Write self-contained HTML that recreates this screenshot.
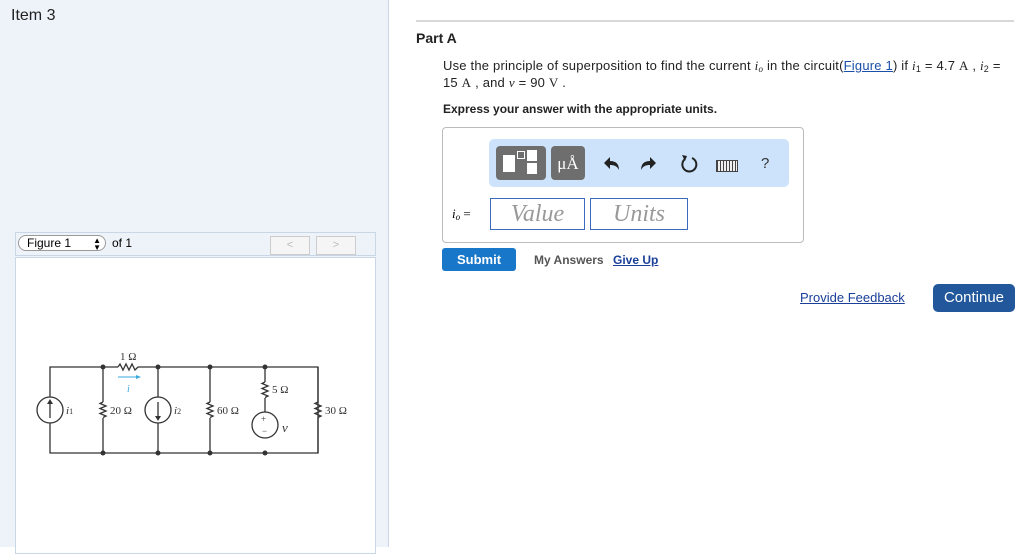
<!DOCTYPE html>
<html><head><meta charset="utf-8"><style>
body{margin:0;width:1024px;height:547px;background:#fff;font-family:"Liberation Sans",sans-serif;position:relative;overflow:hidden}
.left{position:absolute;left:0;top:0;width:388px;height:547px;background:#eef3f9;border-right:1px solid #c9d6e6}
.a{position:absolute}
.tb{background:#6e6e6e;border-radius:4px;position:absolute;top:146px;height:34px}
.inp{position:absolute;top:198px;width:95px;height:32px;border:1px solid #3a6bbf;box-sizing:border-box;font-family:"Liberation Serif",serif;font-style:italic;font-size:24px;color:#999;text-align:center;line-height:30px}
.s{font-size:9px;line-height:0;vertical-align:-2px}
.m{font-family:"Liberation Serif",serif}
</style></head><body>
<div class="left"></div>
<div class="a" style="left:11px;top:7px;font-size:16px;color:#222">Item 3</div>
<div class="a" style="left:15px;top:232px;width:359px;height:22px;background:#eef3f9;border:1px solid #c9d6e6"></div>
<div class="a" style="left:18px;top:235px;width:88px;height:16px;border:1px solid #999;border-radius:8px;background:#fff;font-size:12px;line-height:15px;padding-left:8px;box-sizing:border-box">Figure 1<span style="position:absolute;right:4px;font-size:8px;line-height:7px;top:1px">&#9650;<br>&#9660;</span></div>
<div class="a" style="left:112px;top:236px;font-size:12px">of 1</div>
<div class="a" style="left:270px;top:236px;width:38px;height:17px;border:1px solid #ccc;background:#f5f5f5;color:#bbb;font-size:11px;text-align:center;line-height:17px">&lt;</div>
<div class="a" style="left:316px;top:236px;width:38px;height:17px;border:1px solid #ccc;background:#f5f5f5;color:#bbb;font-size:11px;text-align:center;line-height:17px">&gt;</div>
<div class="a" style="left:15px;top:257px;width:359px;height:295px;background:#fff;border:1px solid #c9d6e6"></div>
<svg class="a" style="left:0;top:0" width="388" height="547">
<g stroke="#333" stroke-width="1.3" fill="none">
<path d="M118 367H50V453H318V367H138"/>
<path d="M118 367l2-3l3 6l3-6l3 6l3-6l3 6l3-3"/>
<path d="M103 367V402M103 418V453M103 402l-3 1.5l6 2.5l-6 2.5l6 2.5l-6 2.5l6 2.5l-3 1.5"/>
<path d="M210 367V402M210 418V453M210 402l-3 1.5l6 2.5l-6 2.5l6 2.5l-6 2.5l6 2.5l-3 1.5"/>
<path d="M318 367V402M318 418V453M318 402l-3 1.5l6 2.5l-6 2.5l6 2.5l-6 2.5l6 2.5l-3 1.5"/>
<path d="M265 367V382M265 398V412M265 382l-3 1.5l6 2.5l-6 2.5l6 2.5l-6 2.5l6 2.5l-3 1.5"/>
<path d="M158 367V397M158 423V453"/>
<circle cx="50" cy="410" r="13" fill="#fff"/>
<circle cx="158" cy="410" r="13" fill="#fff"/>
<circle cx="265" cy="425" r="13" fill="#fff"/>
<path d="M50 418V403M158 402V417"/>
</g>
<path d="M50 399l-3 5h6zM158 421l-3-5h6z" fill="#333"/>
<g fill="#333"><circle cx="103" cy="367" r="2.5"/><circle cx="158" cy="367" r="2.5"/><circle cx="210" cy="367" r="2.5"/><circle cx="265" cy="367" r="2.5"/>
<circle cx="103" cy="453" r="2.5"/><circle cx="158" cy="453" r="2.5"/><circle cx="210" cy="453" r="2.5"/><circle cx="265" cy="453" r="2.5"/></g>
<path d="M118 377H138" stroke="#39a9e0" stroke-width="1"/><path d="M141 377l-5-2v4z" fill="#39a9e0"/>
<g font-family="Liberation Serif,serif" font-size="11" fill="#333">
<text x="120" y="360">1 Ω</text>
<text x="127" y="392" fill="#39a9e0" font-style="italic" font-size="10">i</text>
<text x="66" y="414" font-style="italic">i<tspan font-size="8" font-style="normal">1</tspan></text>
<text x="110" y="414">20 Ω</text>
<text x="174" y="414" font-style="italic">i<tspan font-size="8" font-style="normal">2</tspan></text>
<text x="217" y="414">60 Ω</text>
<text x="272" y="393">5 Ω</text>
<text x="325" y="414">30 Ω</text>
<text x="261" y="422" font-size="9">+</text><text x="262" y="434" font-size="9">−</text>
<text x="282" y="432" font-style="italic" font-size="13">v</text>
</g>
</svg>
<div class="a" style="left:416px;top:20px;width:598px;height:2px;background:#d8d8d8"></div>
<div class="a" style="left:416px;top:30px;font-size:14px;font-weight:bold;color:#222">Part A</div>
<div class="a" style="left:443px;top:57px;width:590px;font-size:13px;line-height:17px;color:#222;letter-spacing:0.2px;white-space:nowrap">Use the principle of superposition to find the current <i class="m">i<span class="s">o</span></i> in the circuit(<span style="color:#1a4faa;text-decoration:underline">Figure 1</span>) if <i class="m">i</i><span class="s">1</span> = 4.7 <span class="m">A</span> , <i class="m">i</i><span class="s">2</span> =<br>15 <span class="m">A</span> , and <i class="m">v</i> = 90 <span class="m">V</span> .</div>
<div class="a" style="left:443px;top:102px;font-size:12px;font-weight:bold;color:#222">Express your answer with the appropriate units.</div>
<div class="a" style="left:442px;top:127px;width:362px;height:116px;border:1px solid #bbb;border-radius:4px;box-sizing:border-box"></div>
<div class="a" style="left:489px;top:139px;width:300px;height:48px;background:#cce3fb;border-radius:5px"></div>
<div class="tb" style="left:496px;width:50px"></div>
<div class="a" style="left:503px;top:155px;width:12px;height:17px;background:#fff"></div>
<div class="a" style="left:517px;top:151px;width:6px;height:6px;border:1px solid #fff"></div>
<div class="a" style="left:527px;top:150px;width:10px;height:11px;background:#fff"></div>
<div class="a" style="left:527px;top:163px;width:10px;height:11px;background:#fff"></div>
<div class="tb" style="left:551px;width:34px;color:#fff;font-family:'Liberation Serif',serif;font-size:17px;text-align:center;line-height:36px">μÅ</div>
<svg class="a" style="left:600px;top:152px" width="100" height="22"><path d="M4 11l6-6v4c6 0 9 3 9 9c-2-4-5-5-9-5v4z" fill="#222"/><path d="M56 11l-6-6v4c-6 0-9 3-9 9c2-4 5-5 9-5v4z" fill="#222"/><path d="M92 6a7 7 0 1 1-7 1" stroke="#222" stroke-width="2" fill="none"/><path d="M82 3l5 1l-2 5z" fill="#222"/></svg>
<div class="a" style="left:716px;top:160px;width:20px;height:10px;border:1px solid #444;background:repeating-linear-gradient(90deg,#444 0 1px,#eee 1px 3px)"></div>
<div class="a" style="left:761px;top:155px;font-size:15px;color:#333">?</div>
<div class="a" style="left:452px;top:206px;font-family:'Liberation Serif',serif;font-style:italic;font-size:13px">i<span class="s">o</span><span style="font-style:normal"> =</span></div>
<div class="inp" style="left:490px">Value</div>
<div class="inp" style="left:590px;width:98px">Units</div>
<div class="a" style="left:442px;top:248px;width:74px;height:23px;background:#1977c9;border-radius:3px;color:#fff;font-weight:bold;font-size:13px;text-align:center;line-height:23px">Submit</div>
<div class="a" style="left:534px;top:253px;font-size:12px;font-weight:bold;color:#555">My Answers</div>
<div class="a" style="left:613px;top:253px;font-size:12px;font-weight:bold;color:#1a3f99;text-decoration:underline">Give Up</div>
<div class="a" style="left:800px;top:290px;font-size:13px;color:#1a3f99;text-decoration:underline">Provide Feedback</div>
<div class="a" style="left:933px;top:284px;width:82px;height:28px;background:#22589b;border-radius:5px;color:#fff;font-size:15px;text-align:center;line-height:27px">Continue</div>
</body></html>
